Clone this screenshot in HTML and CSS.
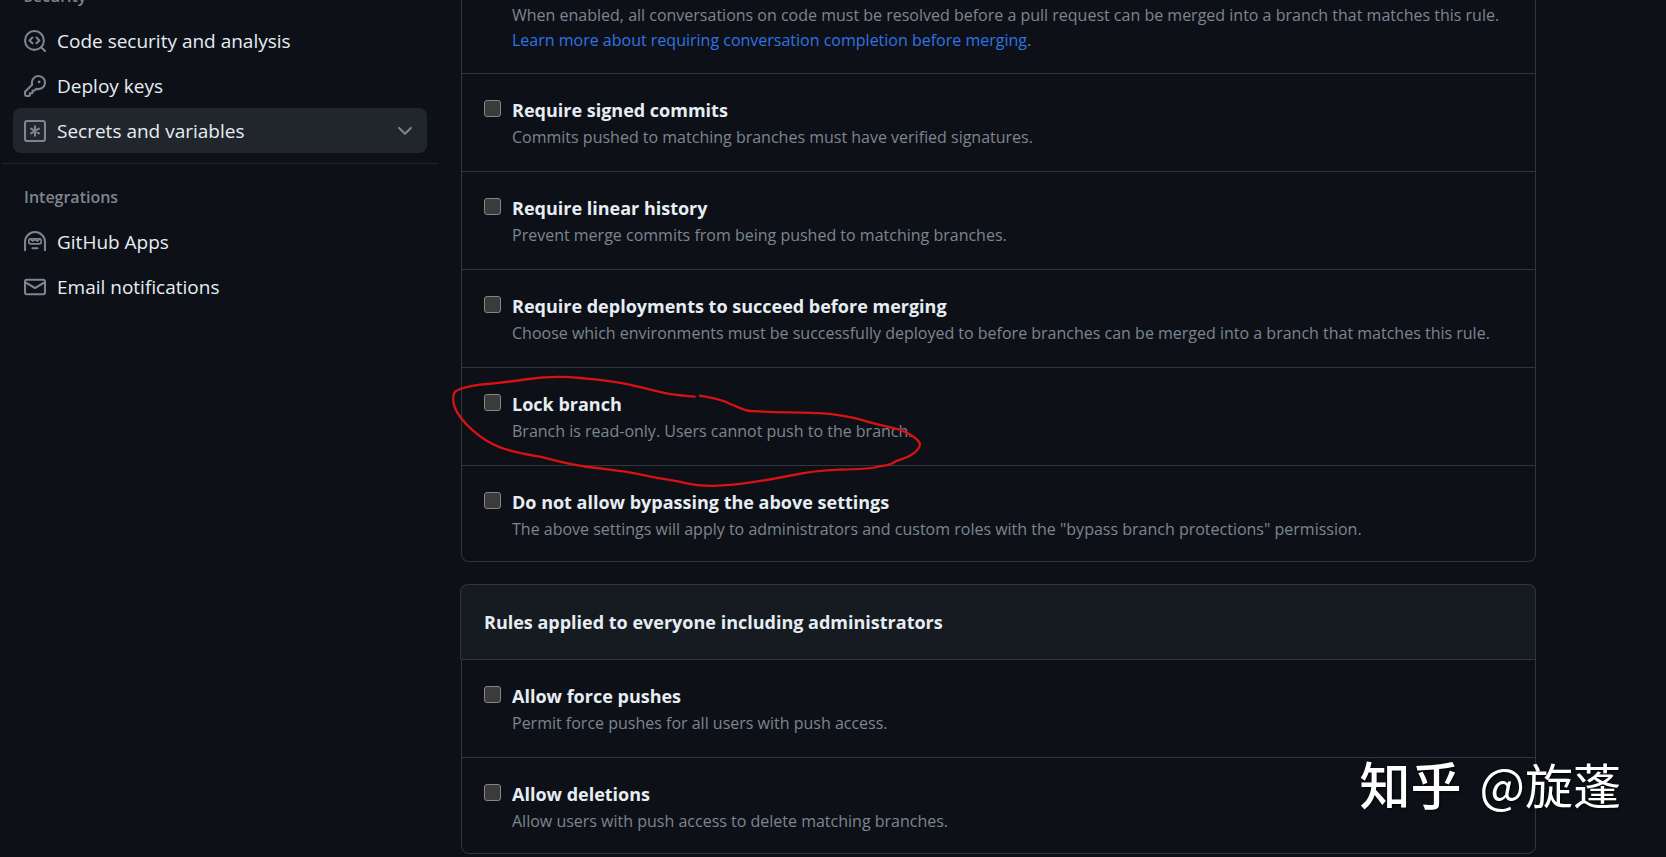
FILE: index.html
```
<!DOCTYPE html>
<html lang="en">
<head>
    <meta charset="UTF-8">
    <meta name="viewport" content="width=device-width, initial-scale=1.0">
    <title>Branch protection rule</title>
    <link rel="stylesheet" href="styles.css">
</head>
<body>
<div class="page">
    <nav class="sidebar">
        <h2 class="nav-heading">Security</h2>
        <ul class="nav-list">
            <li>
                <a class="nav-item" href="#">
                    <svg class="icon line" viewBox="0 0 16 16"><circle cx="7.6" cy="7.6" r="6.85"/><path d="M12.5 12.5l2.8 2.8M6.1 5.5L4 7.6l2.1 2.1M9.1 5.5l2.1 2.1-2.1 2.1"/></svg>
                    <span>Code security and analysis</span>
                </a>
            </li>
            <li>
                <a class="nav-item" href="#">
                    <svg class="icon" viewBox="0 0 16 16"><path d="M10.5 0a5.499 5.499 0 1 1-1.288 10.848l-.932.932a.749.749 0 0 1-.53.22H7v.75a.749.749 0 0 1-.22.53l-.5.5a.749.749 0 0 1-.53.22H5v.75a.749.749 0 0 1-.22.53l-.5.5a.749.749 0 0 1-.53.22h-2A1.75 1.75 0 0 1 0 14.25v-2c0-.199.079-.389.22-.53l4.932-4.932A5.5 5.5 0 0 1 10.5 0Zm-4 5.5c-.001.431.069.86.205 1.269a.75.75 0 0 1-.181.768L1.5 12.56v1.69c0 .138.112.25.25.25h1.69l.06-.06v-1.19a.75.75 0 0 1 .75-.75h1.19l.06-.06v-1.19a.75.75 0 0 1 .75-.75h1.19l1.023-1.025a.75.75 0 0 1 .768-.18A4 4 0 1 0 6.5 5.5ZM11 6a1 1 0 1 1 0-2 1 1 0 0 1 0 2Z"/></svg>
                    <span>Deploy keys</span>
                </a>
            </li>
            <li>
                <button class="nav-item selected" type="button">
                    <svg class="icon line" viewBox="0 0 16 16"><rect x=".75" y=".75" width="14.5" height="14.5" rx="1.5"/><path d="M8 4.6v6.8M5.1 6.3l5.8 3.4M10.9 6.3L5.1 9.7"/></svg>
                    <span>Secrets and variables</span>
                    <svg class="icon chevron" viewBox="0 0 16 16"><path d="M12.78 5.22a.749.749 0 0 1 0 1.06l-4.25 4.25a.749.749 0 0 1-1.06 0L3.22 6.28a.749.749 0 1 1 1.06-1.06L8 8.939l3.72-3.719a.749.749 0 0 1 1.06 0Z"/></svg>
                </button>
            </li>
        </ul>
        <hr class="nav-divider">
        <h2 class="nav-heading">Integrations</h2>
        <ul class="nav-list">
            <li>
                <a class="nav-item" href="#">
                    <svg class="icon line" viewBox="0 0 16 16"><path d="M.75 14V8a7.25 7.25 0 0 1 14.5 0v6M6.2 12.6h3.6"/><path class="thin" d="M4.9 5.6h6.2a1.4 1.4 0 0 1 1.4 1.4v1a1.4 1.4 0 0 1-1.4 1.4H4.9A1.4 1.4 0 0 1 3.5 8V7a1.4 1.4 0 0 1 1.4-1.4ZM5 6.3l1.3 1.1L8 6.2l1.7 1.2L11 6.3"/></svg>
                    <span>GitHub Apps</span>
                </a>
            </li>
            <li>
                <a class="nav-item" href="#">
                    <svg class="icon" viewBox="0 0 16 16"><path d="M1.75 2h12.5c.966 0 1.75.784 1.75 1.75v8.5A1.75 1.75 0 0 1 14.25 14H1.75A1.75 1.75 0 0 1 0 12.25v-8.5C0 2.784.784 2 1.75 2ZM1.5 12.251c0 .138.112.25.25.25h12.5a.25.25 0 0 0 .25-.25V5.809L8.38 9.397a.75.75 0 0 1-.76 0L1.5 5.809v6.442Zm13-8.181v-.32a.25.25 0 0 0-.25-.25H1.75a.25.25 0 0 0-.25.25v.32L8 7.88Z"/></svg>
                    <span>Email notifications</span>
                </a>
            </li>
        </ul>
    </nav>

    <main class="content">
        <section class="box box-continued">
            <div class="box-row">
                <div class="rule">
                    <p class="note">When enabled, all conversations on code must be resolved before a pull request can be merged into a branch that matches this rule. <a class="link" href="#">Learn more about requiring conversation completion before merging</a>.</p>
                </div>
            </div>
            <div class="box-row">
                <input class="check" type="checkbox" id="signed">
                <div class="rule">
                    <label for="signed">Require signed commits</label>
                    <p class="note">Commits pushed to matching branches must have verified signatures.</p>
                </div>
            </div>
            <div class="box-row">
                <input class="check" type="checkbox" id="linear">
                <div class="rule">
                    <label for="linear">Require linear history</label>
                    <p class="note">Prevent merge commits from being pushed to matching branches.</p>
                </div>
            </div>
            <div class="box-row">
                <input class="check" type="checkbox" id="deployments">
                <div class="rule">
                    <label for="deployments">Require deployments to succeed before merging</label>
                    <p class="note">Choose which environments must be successfully deployed to before branches can be merged into a branch that matches this rule.</p>
                </div>
            </div>
            <div class="box-row marked">
                <input class="check" type="checkbox" id="lock">
                <div class="rule">
                    <label for="lock">Lock branch</label>
                    <p class="note">Branch is read-only. Users cannot push to the branch.</p>
                </div>
                <svg class="scribble" viewBox="0 0 1500 660"><path d="M764 110C740 107 710 106 680 100C640 92 600 80 550 70C500 61 460 58 420 54C370 49 310 51 265 57C210 65 160 71 120 74C90 78 60 86 48 93C38 100 37 125 45 144C55 168 75 190 95 208C120 231 150 250 180 262C215 276 260 283 310 292C360 306 410 318 470 324C520 330 560 334 600 343C650 355 700 360 740 370C780 379 830 379 880 374C950 367 1010 355 1060 345C1110 334 1150 331 1200 329C1250 328 1290 327 1310 321C1335 316 1350 316 1362 307C1375 299 1395 297 1412 286C1430 274 1443 262 1439 250C1433 234 1410 222 1385 211C1350 199 1310 195 1270 181C1235 171 1195 163 1150 160C1090 156 1000 158 930 153C905 150 890 138 870 132C850 119 815 114 780 107"/></svg>
            </div>
            <div class="box-row">
                <input class="check" type="checkbox" id="bypass">
                <div class="rule">
                    <label for="bypass">Do not allow bypassing the above settings</label>
                    <p class="note">The above settings will apply to administrators and custom roles with the "bypass branch protections" permission.</p>
                </div>
            </div>
        </section>

        <section class="box">
            <h2 class="box-header">Rules applied to everyone including administrators</h2>
            <div class="box-row">
                <input class="check" type="checkbox" id="force">
                <div class="rule">
                    <label for="force">Allow force pushes</label>
                    <p class="note">Permit force pushes for all users with push access.</p>
                </div>
            </div>
            <div class="box-row">
                <input class="check" type="checkbox" id="deletions">
                <div class="rule">
                    <label for="deletions">Allow deletions</label>
                    <p class="note">Allow users with push access to delete matching branches.</p>
                </div>
            </div>
        </section>
    </main>
</div>
<div class="watermark" lang="zh-CN"><b>知乎</b><span>@旋蓬</span></div>
</body>
</html>
```
FILE: styles.css
```
* {
    box-sizing: border-box;
}

body {
    margin: 0;
    background: #0d1117;
    color: #e6edf3;
    font-family: "Open Sans", "Noto Sans", sans-serif;
    font-size: 19px;
    overflow: hidden;
}

h2, p, ul {
    margin: 0;
    padding: 0;
}

.page {
    display: grid;
    grid-template-columns: 438px 1fr;
    column-gap: 23px;
    padding-right: 130px;
}

/* sidebar */
.sidebar {
    margin-top: -16px;
    padding-left: 2px;
}

.nav-heading {
    padding: 0 22px;
    font-size: 16px;
    font-weight: 600;
    line-height: 24px;
    color: #7d8590;
}

.nav-list {
    list-style: none;
    padding: 10px 11px 0;
}

.nav-item {
    display: flex;
    align-items: center;
    gap: 11px;
    width: 100%;
    height: 45px;
    padding: 0 11px;
    border: 0;
    border-radius: 8px;
    background: none;
    color: #e6edf3;
    font: inherit;
    font-size: 19px;
    text-decoration: none;
    cursor: pointer;
}

.nav-item:hover,
.nav-item.selected {
    background: #21262d;
}

.icon {
    width: 22px;
    height: 22px;
    fill: #7d8590;
    flex: none;
}

.line {
    fill: none;
    stroke: #7d8590;
    stroke-width: 1.5;
    stroke-linecap: round;
    stroke-linejoin: round;
}

.thin {
    stroke-width: 1.2;
}

.chevron {
    margin-left: auto;
}

.nav-divider {
    height: 1px;
    margin: 10px 0 21px;
    border: 0;
    background: #21262d;
}

/* rule boxes */
.box {
    margin-bottom: 22px;
    border: 1px solid #30363d;
    border-radius: 8px;
}

.box-continued {
    border-top: 0;
    border-radius: 0 0 8px 8px;
}

.box-header {
    margin: -1px -1px 0 -2px;
    padding: 22px 23px;
    border: 1px solid #30363d;
    border-bottom: 0;
    border-radius: 8px 8px 0 0;
    background: #161b22;
    font-size: 18px;
    font-weight: 700;
    line-height: 30px;
}

.box-row {
    display: flex;
    align-items: flex-start;
    padding: 21px 22px;
    border-top: 1px solid #30363d;
}

.box-row:last-child {
    padding-bottom: 19px;
}

.box-continued .box-row:first-child {
    padding-top: 3px;
    padding-bottom: 20px;
    border-top: 0;
}

.rule {
    flex: 1;
}

.check + .rule {
    margin-left: 11px;
}

.rule:first-child {
    margin-left: 28px;
}

.rule label {
    display: block;
    font-size: 18px;
    font-weight: 700;
    line-height: 30px;
}

.note {
    color: #7d8590;
    font-size: 16px;
    line-height: 25px;
}

.check {
    appearance: none;
    width: 17px;
    height: 17px;
    margin: 5px 0 0;
    border: 1px solid #858585;
    border-radius: 3px;
    background: #3b3b3b;
}

.check:checked {
    background: #1f6feb;
}

.link {
    color: #2f74e6;
    text-decoration: none;
}

.marked {
    position: relative;
}

.scribble {
    position: absolute;
    top: -8px;
    left: -22px;
    width: 500px;
    height: 220px;
    fill: none;
    stroke: #d81214;
    stroke-width: 7;
    stroke-linecap: round;
    pointer-events: none;
}

.watermark {
    position: fixed;
    right: 45px;
    bottom: 41px;
    display: flex;
    align-items: center;
    gap: 18px;
    color: #fff;
    font-family: "Noto Sans CJK SC", sans-serif;
    font-size: 48px;
    line-height: 66px;
    text-shadow: 1px 1px 3px #000;
}

.watermark b {
    font-size: 51px;
    font-weight: 500;
}
```
